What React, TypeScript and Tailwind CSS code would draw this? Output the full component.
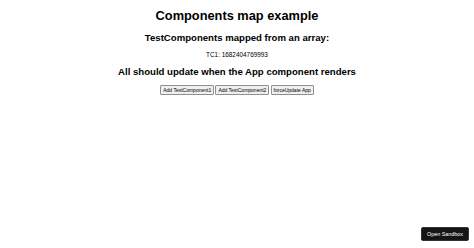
import { useState } from "react";

const btn =
  "bg-[#efefef] border border-[#8f8f8f] rounded-[1px] px-[2px] py-[0.6px] text-[5px] leading-[7px] text-black";

export default function App() {
  const [stamp] = useState(1682404769993);

  return (
    <div className="min-h-[248px] bg-white text-black font-['Liberation_Sans',Arial,sans-serif] text-center">
      <h1 className="pt-[8.6px] text-[12.8px] leading-[14.7px] font-bold">
        Components map example
      </h1>
      <h2 className="mt-[8.6px] text-[9.6px] leading-[11px] font-bold">
        TestComponents mapped from an array:
      </h2>
      <div className="mt-[8px] text-[6.4px] leading-[7.4px]">
        <div>TC1: {stamp}</div>
      </div>
      <h2 className="mt-[8px] text-[9.6px] leading-[11px] font-bold">
        All should update when the App component renders
      </h2>
      <div className="mt-[8px] flex justify-center gap-[1.2px]">
        <button className={btn}>Add TestComponent1</button>
        <button className={btn}>Add TestComponent2</button>
        <button className={btn}>forceUpdate App</button>
      </div>

      <a className="fixed right-[5px] bottom-[7px] bg-[#151515] text-white rounded-[2px] w-[48px] h-[14px] flex items-center justify-center text-[5.4px] border border-[#333]">
        Open Sandbox
      </a>
    </div>
  );
}
